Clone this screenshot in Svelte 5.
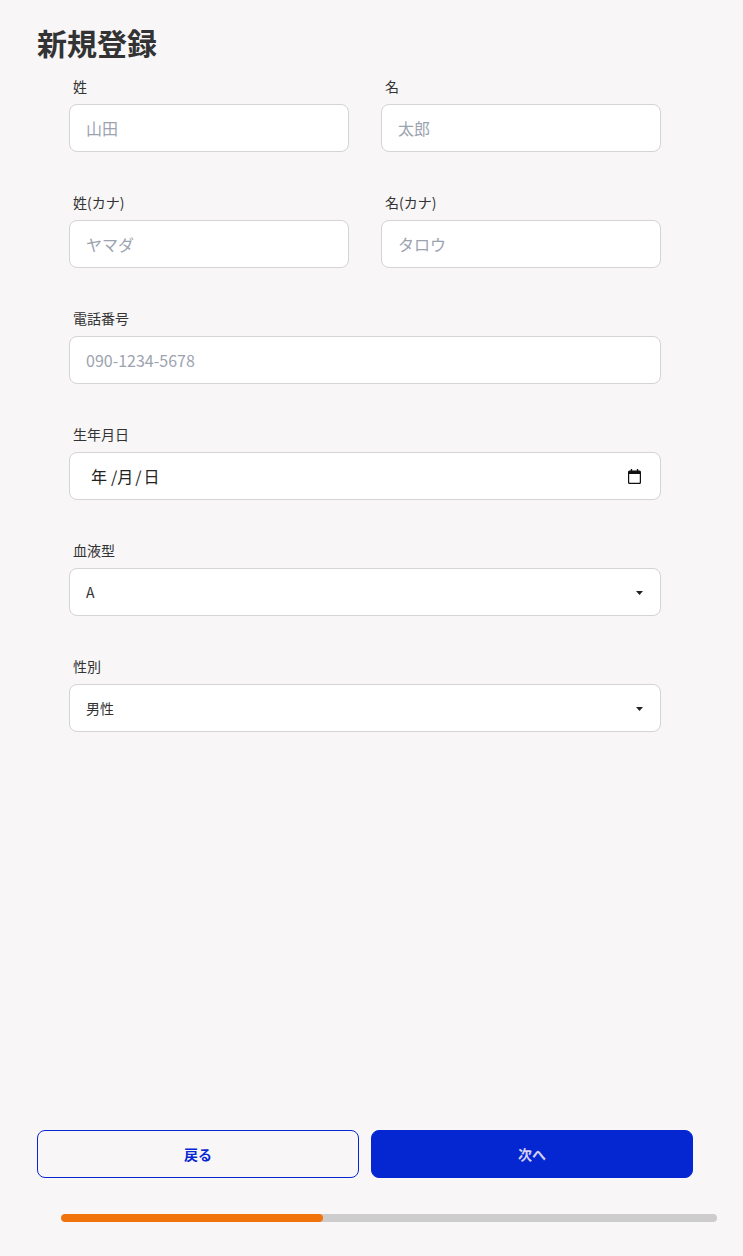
<script>
  const progress = 40;
</script>

<div class="page">
  <h1>新規登録</h1>

  <form class="form">
    <div class="row">
      <div class="field">
        <label for="last">姓</label>
        <input id="last" type="text" placeholder="山田" />
      </div>
      <div class="field">
        <label for="first">名</label>
        <input id="first" type="text" placeholder="太郎" />
      </div>
    </div>
    <div class="row">
      <div class="field">
        <label for="lastKana">姓(カナ)</label>
        <input id="lastKana" type="text" placeholder="ヤマダ" />
      </div>
      <div class="field">
        <label for="firstKana">名(カナ)</label>
        <input id="firstKana" type="text" placeholder="タロウ" />
      </div>
    </div>
    <div class="field">
      <label for="tel">電話番号</label>
      <input id="tel" type="tel" placeholder="090-1234-5678" />
    </div>
    <div class="field">
      <span class="label">生年月日</span>
      <div class="box date">
        <span class="date-text"><span>年</span><span class="first-slash">/</span><span>月</span><span>/</span><span>日</span></span>
        <svg width="13" height="15" viewBox="0 0 14 15" preserveAspectRatio="none" aria-hidden="true">
          <path d="M3 0h1.500v1.500h5V0H11v1.500h1.500A1.500 1.500 0 0 1 14 3v10.500a1.500 1.500 0 0 1-1.500 1.500h-11A1.500 1.500 0 0 1 0 13.500V3a1.500 1.500 0 0 1 1.500-1.500H3zM1.300 5v8.200c0 .3.200.5.500.5h10.400c.3 0 .5-.2.5-.5V5z" fill="#111"/>
        </svg>
      </div>
    </div>
    <div class="field">
      <label for="blood">血液型</label>
      <div class="select-wrap">
        <select id="blood">
          <option>A</option>
          <option>B</option>
          <option>O</option>
          <option>AB</option>
        </select>
        <svg class="arrow" width="7" height="4" viewBox="0 0 7 4" aria-hidden="true"><path d="M0 0h7L3.500 4z"/></svg>
      </div>
    </div>
    <div class="field">
      <label for="gender">性別</label>
      <div class="select-wrap">
        <select id="gender">
          <option>男性</option>
          <option>女性</option>
        </select>
        <svg class="arrow" width="7" height="4" viewBox="0 0 7 4" aria-hidden="true"><path d="M0 0h7L3.500 4z"/></svg>
      </div>
    </div>
  </form>

  <div class="footer">
    <div class="buttons">
      <button type="button" class="btn back">戻る</button>
      <button type="button" class="btn next">次へ</button>
    </div>
    <div class="track">
      <div class="fill" style="width: {progress}%"></div>
    </div>
  </div>
</div>

<style>
  :global(body) {
    margin: 0;
    background: #f8f6f7;
  }

  .page {
    height: 1256px;
    box-sizing: border-box;
    display: flex;
    flex-direction: column;
    padding: 22px 26px 34px 37px;
    font-family: "Noto Sans CJK JP", "Noto Sans", sans-serif;
    color: #333;
  }

  h1 {
    margin: 0;
    font-size: 30px;
    line-height: 40px;
    font-weight: 700;
    color: #333;
  }

  .form {
    display: flex;
    flex-direction: column;
    gap: 40px;
    width: 592px;
    margin: 14px 0 0 32px;
  }

  .row {
    display: grid;
    grid-template-columns: 280px 280px;
    gap: 32px;
  }

  .field {
    display: flex;
    flex-direction: column;
    gap: 8px;
  }

  label,
  .label {
    height: 20px;
    padding-left: 4px;
    font-size: 14px;
    line-height: 20px;
    color: #333;
  }

  input,
  select,
  .box {
    box-sizing: border-box;
    width: 100%;
    height: 48px;
    background: #fff;
    border: 1px solid #d4d4d4;
    border-radius: 8px;
    font-family: inherit;
    color: #333;
  }

  input {
    padding: 0 16px;
    font-size: 16px;
    outline: none;
  }

  input::placeholder {
    color: #9ca3af;
    opacity: 1;
  }

  .select-wrap {
    position: relative;
    height: 48px;
  }

  select {
    display: block;
    appearance: none;
    padding: 0 16px;
    font-size: 14px;
  }

  .arrow {
    position: absolute;
    top: 23px;
    right: 18px;
    fill: #222;
    pointer-events: none;
  }

  .date {
    display: flex;
    align-items: center;
    justify-content: space-between;
    padding: 0 19px 0 21px;
  }

  .date-text {
    display: flex;
    gap: 2px;
    font-size: 16px;
    color: #222;
  }

  .first-slash {
    margin: 0 -2px 0 2px;
  }

  .footer {
    margin-top: auto;
    display: flex;
    flex-direction: column;
    gap: 36px;
  }

  .buttons {
    display: flex;
    gap: 12px;
    width: 656px;
  }

  .btn {
    flex: 1;
    height: 48px;
    border-radius: 8px;
    font-family: inherit;
    font-size: 14px;
    font-weight: 700;
  }

  .back {
    background: transparent;
    border: 1px solid #0527d2;
    color: #0527d2;
  }

  .next {
    background: #0527d2;
    border: 1px solid #0527d2;
    color: #d5d0f5;
  }

  .track {
    height: 8px;
    margin-left: 24px;
    width: 656px;
    background: #cdcdcd;
    border-radius: 4px;
    overflow: hidden;
  }

  .fill {
    height: 100%;
    background: #f2720c;
    border-radius: 4px;
  }
</style>
